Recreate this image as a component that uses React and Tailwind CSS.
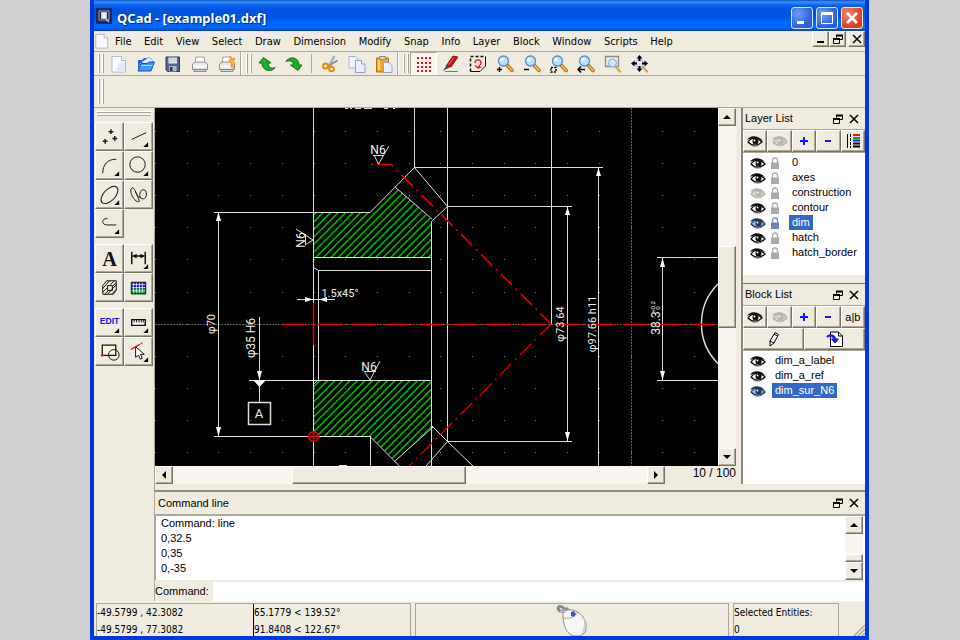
// App.jsx
import { useState } from 'react';

const raised =
  'border border-t-white border-l-white border-r-[#77756a] border-b-[#77756a] bg-[#efebde] shadow-[inset_-1px_-1px_0_#aca899]';

const MENUS = [
  'File', 'Edit', 'View', 'Select', 'Draw', 'Dimension', 'Modify', 'Snap',
  'Info', 'Layer', 'Block', 'Window', 'Scripts', 'Help',
];

const LAYERS = [
  { name: '0', visible: true },
  { name: 'axes', visible: true },
  { name: 'construction', visible: false },
  { name: 'contour', visible: true },
  { name: 'dim', visible: true },
  { name: 'hatch', visible: true },
  { name: 'hatch_border', visible: true },
];

const BLOCKS = ['dim_a_label', 'dim_a_ref', 'dim_sur_N6'];

const HISTORY = ['Command: line', '0,32.5', '0,35', '0,-35'];

/* ---------- icons ---------- */

const Icon = ({ children, className = 'w-[18px] h-[18px]', box = '0 0 18 18' }) => (
  <svg viewBox={box} className={className} fill="none" aria-hidden="true">
    {children}
  </svg>
);

const PageIcon = () => (
  <Icon>
    <path d="M2 1.500h9.500l4 4V17H2z" fill="#fbfcff" stroke="#b4b9cc" />
    <path d="M8 9l7-2v9.500H6z" fill="#e2e8fa" />
    <path d="M11.500 1.500v4h4" fill="#fff" stroke="#a9aec4" />
  </Icon>
);

const OpenIcon = () => (
  <Icon>
    <path d="M1 5h4l2-2h4v5H3l-2 8z" fill="#1b62c8" />
    <path d="M5 7l7-5 4 4-3 5H5z" fill="#e8f1ff" stroke="#6f9fdc" strokeWidth=".8" />
    <path d="M1 16L4 8.500h6l2-1.500h5.500L14 16z" fill="#3d9bf5" stroke="#0c51b8" />
    <path d="M4.500 10.500h11" stroke="#a8d6ff" />
  </Icon>
);

const SaveIcon = () => (
  <Icon>
    <path d="M2 2h13.500v14.500H3.500L2 15z" fill="#56658c" stroke="#2c3656" />
    <path d="M4.500 2.500h8.500v6H4.500z" fill="#e6ebf5" />
    <path d="M4.500 4h8.500M4.500 6h8.500" stroke="#b3bdd4" />
    <path d="M5 11h7.500v5.500H5z" fill="#aeb8cf" />
    <path d="M6 12h2.500v4H6z" fill="#29324e" />
  </Icon>
);

const PrintIcon = ({ preview }) => (
  <Icon>
    <path d="M5 2h8l1 6H4z" fill="#fff" stroke="#a0a0a0" />
    <path d="M1.500 9l2.500-2h10l2.500 2v5.500h-15z" fill="#e9e9ea" stroke="#8d8d90" />
    <path d="M2 11.500h14" stroke="#fff" strokeWidth="1.500" />
    <path d="M3 14.500h12v2H3z" fill="#d2d2d4" stroke="#77777a" strokeWidth=".8" />
    {preview && (
      <path d="M12 1l2 3 3-1-1.500 3L17 9l-2.500 1L16 13l-3-1 .5-4-3-3 2.500-.5z" fill="#ffb325" stroke="#e87f10" strokeWidth=".7" />
    )}
  </Icon>
);

const UndoIcon = () => (
  <Icon>
    <path d="M5.500 2.500L1 8h3c0 5 4 8 8.500 7.500 2-.3 3.500-1.500 4.500-3-3.500 1.500-6.500.5-7-4.500h3z" fill="#1fae25" stroke="#08720f" />
  </Icon>
);

const RedoIcon = () => (
  <Icon>
    <path d="M13 15.500L17 10h-3C14 5 10.500 2.500 6.500 3 4 3.300 2 4.700 1 6.500c4-1.500 7-.5 7.500 3.500H5.500z" fill="#1fae25" stroke="#08720f" />
  </Icon>
);

const CutIcon = () => (
  <Icon>
    <path d="M13.500 1L8 10.500M16.500 5.500L7 11" stroke="#7d8899" strokeWidth="2" />
    <path d="M13.500 1L8.500 9.500" stroke="#dfe6f0" strokeWidth=".8" />
    <circle cx="4.500" cy="11" r="2.500" stroke="#e58a12" strokeWidth="2" />
    <circle cx="10.500" cy="14" r="2.300" stroke="#e58a12" strokeWidth="2" />
  </Icon>
);

const CopyIcon = () => (
  <Icon>
    <path d="M1 1.500h6.500l2.500 2.500V13H1z" fill="#f4f7ff" stroke="#a3aed0" />
    <path d="M7.500 5.500h6l3.500 3.500v8.500H7.500z" fill="#e9effd" stroke="#93a1cb" />
    <path d="M13.500 5.500V9H17" fill="#fff" stroke="#93a1cb" />
  </Icon>
);

const PasteIcon = () => (
  <Icon>
    <path d="M1.500 3h12v14h-12z" fill="#f0a52c" stroke="#b97408" />
    <path d="M3 5h2v10H3z" fill="#ffd585" />
    <path d="M4.500 1.500h6v3h-6z" fill="#d5d5d2" stroke="#8e8b7e" />
    <path d="M8.500 7.500h5.500l3 3v7H8.500z" fill="#e9effd" stroke="#93a1cb" />
  </Icon>
);

const GridIcon = () => (
  <Icon>
    {[2, 6, 10, 14].map((x) =>
      [2, 7, 11, 15].map((y) => <rect key={`${x}-${y}`} x={x} y={y} width="2" height="2" fill="#f01010" />)
    )}
  </Icon>
);

const DraftIcon = () => (
  <Icon>
    <path d="M11 1l5 1-7 10-5-1z" fill="#c41414" stroke="#7c0a0a" strokeWidth=".8" />
    <path d="M12 2.500L6.500 9.500" stroke="#ff6a5a" />
    <path d="M4 11l4.500 1-5 2.500-2.500 1.500z" fill="#454545" />
    <path d="M3 16.500h13" stroke="#e04a4a" />
  </Icon>
);

const RedrawIcon = () => (
  <Icon>
    <path d="M1.500 16.500v-15h15" stroke="#111" strokeWidth="1.500" strokeDasharray="3 2" />
    <path d="M16.500 1.500V11l-5.500 5.500H1.500" stroke="#111" />
    <path d="M6 8a3 3 0 1 1 4.500 2.500L9 12.500M6 10.500l3 2.500 3.500-1" stroke="#f01010" strokeWidth="1.300" />
  </Icon>
);

const ZoomIcon = ({ kind }) => (
  <Icon>
    <path d="M11 10l5 5.500" stroke="#9a5d0e" strokeWidth="3.500" strokeLinecap="round" />
    <path d="M11.500 10.500l4.500 5" stroke="#f7b23c" strokeWidth="2" strokeLinecap="round" />
    <circle cx="7.500" cy="6" r="5" fill="#b5e2fb" stroke="#5a8cc8" strokeWidth="1.300" />
    <circle cx="6" cy="4.500" r="2" fill="#eefaff" />
    {kind === 'in' && <path d="M1 14.500h5M3.500 12v5" stroke="#000" strokeWidth="1.500" />}
    {kind === 'out' && <path d="M1 14.500h5" stroke="#000" strokeWidth="1.500" />}
    {kind === 'auto' && <path d="M1 12.500h5v4.500h-5z" stroke="#000" strokeWidth="1.500" strokeDasharray="2 1.200" />}
    {kind === 'prev' && <path d="M1 14.500h7M4 11.500l-3 3 3 3" stroke="#000" strokeWidth="1.500" />}
  </Icon>
);

const ZoomWindowIcon = () => (
  <Icon>
    <path d="M1.500 1.500h13v10h-13z" stroke="#8b8b86" strokeWidth="1.300" />
    <path d="M11.500 11.500l4.500 5" stroke="#d9a659" strokeWidth="2.500" strokeLinecap="round" />
    <circle cx="8.500" cy="8" r="4" fill="#cdeafb" stroke="#88aad2" />
  </Icon>
);

const PanIcon = () => (
  <Icon>
    <path d="M11 11l5 5.500" stroke="#d9a659" strokeWidth="2.500" strokeLinecap="round" />
    <circle cx="8.500" cy="8.500" r="4" fill="#dcf0fb" stroke="#9db8d6" />
    <path d="M8.500 0l3 3.500h-2V6h-2V3.500h-2zM8.500 17l3-3.500h-2V11h-2v2.500h-2zM0 8.500l3.500-3v2H6v2H3.500v2zM17 8.500l-3.500-3v2H11v2h2.500v2z" fill="#000" />
  </Icon>
);

const EyeIcon = ({ dim, tint }) => {
  const c = dim ? '#b5b3ab' : tint ? '#1d3763' : '#0a0a0a';
  return (
    <Icon className="w-4 h-3" box="0 0 16 12">
      <path d="M1 7c3-4.500 9-5 14 0-4 4-10 4.500-14 0z" fill={dim ? '#d8d6ce' : tint ? '#a9bddd' : '#fff'} stroke={c} strokeWidth="1.200" />
      <path d="M0 5C3 0 11 0 16 6 11 3 6 2 0 5z" fill={c} />
      <circle cx="8.500" cy="6.500" r="3" fill={c} />
      <circle cx="7.500" cy="5.500" r="1" fill="#fff" />
      <path d="M3 9.500c3 2.500 8 2 10-.5" stroke={dim ? '#c9c7be' : '#7d8088'} />
    </Icon>
  );
};

const LockIcon = ({ tint }) => (
  <Icon className="w-2.5 h-3" box="0 0 10 12">
    <path d="M2.500 6V3.500a2.500 2.500 0 0 1 5 0V6" stroke={tint ? '#8099c6' : '#b0b0b0'} strokeWidth="1.300" />
    <path d="M1 5.500h8V12H1z" fill={tint ? '#6c86b8' : '#a9a9a9'} />
  </Icon>
);

const PlusIcon = () => (
  <Icon className="w-2.5 h-2.5" box="0 0 10 10">
    <path d="M1 5h8M5 1v8" stroke="#1414f0" strokeWidth="2" />
  </Icon>
);

const MinusIcon = () => (
  <Icon className="w-2.5 h-2.5" box="0 0 10 10">
    <path d="M2 5h6" stroke="#1414f0" strokeWidth="2" />
  </Icon>
);

const FloatIcon = () => (
  <Icon className="w-2.5 h-2.5" box="0 0 10 10">
    <path d="M3.500 4V1.500h6v4H7" stroke="#000" />
    <path d="M3 1.500h7" stroke="#000" strokeWidth="2" />
    <path d="M.5 5h6v4.500h-6z" stroke="#000" />
    <path d="M0 5h7" stroke="#000" strokeWidth="2" />
  </Icon>
);

const CloseIcon = () => (
  <Icon className="w-2.5 h-2.5" box="0 0 10 10">
    <path d="M1 1l8 8M9 1L1 9" stroke="#000" strokeWidth="1.500" />
  </Icon>
);

const LayerAttribIcon = () => (
  <Icon className="w-[14px] h-4" box="0 0 14 16">
    <path d="M1.500 1v14" stroke="#000" />
    <path d="M4.500 1v14" stroke="#000" strokeDasharray="3 1" />
    <path d="M7 2h7" stroke="#f01010" strokeWidth="2" />
    <path d="M7 5h7" stroke="#08a015" strokeWidth="2" />
    <path d="M7 7.500h7" stroke="#1515f0" strokeWidth="2" />
    <path d="M7 10.500h7M7 13.500h7" stroke="#000" strokeWidth="2" />
  </Icon>
);

const PencilIcon = () => (
  <Icon className="w-3 h-4" box="0 0 12 16">
    <path d="M2 10L7 1.500l3.500 2L6 12l-4 3zM2 10l4 2M6 3l3.500 2" stroke="#000" fill="#fff" />
  </Icon>
);

const InsertIcon = () => (
  <Icon className="w-[18px] h-4" box="0 0 18 16">
    <path d="M4.500 1h8l4 4v10.500h-12z" fill="#fff" stroke="#000" />
    <path d="M12.500 1v4h4" stroke="#000" />
    <path d="M1 5c4-2.500 8-1 9 3h2.500L9 12 5.500 8H8C7 5.500 5 5 1 6z" fill="#1515f0" stroke="#1515f0" />
  </Icon>
);

const Arrow = ({ dir }) => {
  const d = {
    up: 'M4 2l4 4H0z',
    down: 'M4 6l4-4H0z',
    left: 'M2 4l4-4v8z',
    right: 'M6 4L2 0v8z',
  }[dir];
  return (
    <Icon className="w-2 h-2" box="0 0 8 8">
      <path d={d} fill="#000" />
    </Icon>
  );
};

/* left hand CAD tools, all drawn on a 28 unit grid */
const TOOL_GROUPS = [
  [
    { id: 'Points', more: false, art: <path d="M13 9h5M15.500 6.500v5M17 16h5M19.500 13.500v5M7 19h5M9.500 16.500v5" strokeWidth="1.500" /> },
    { id: 'Lines', more: true, art: <path d="M7 17l15-7" /> },
    { id: 'Arcs', more: true, art: <path d="M7 22C7 13 12 7.500 21 7.500" /> },
    { id: 'Circles', more: true, art: <circle cx="13" cy="13" r="8" /> },
    { id: 'Ellipses', more: true, art: <ellipse cx="14" cy="14.500" rx="11" ry="6" transform="rotate(-46 14 14.500)" /> },
    {
      id: 'Splines', more: false,
      art: <path d="M14 21.500C11 22 6 15 6 10.500 6 6 9 6 10.500 10L14 18c1 3 1 3.500 0 3.500M11 11.500c1 3 5 7 8 7 4 0 4.500-9.500 0-9.500-3.500 0-4.500 6-3 8.500" />,
    },
    { id: 'Polylines', more: true, art: <path d="M12 9c-6-1-7 6-1 6.500h10" /> },
  ],
  [
    { id: 'Text', more: false, letter: true },
    {
      id: 'Dimensions', more: true,
      art: (
        <>
          <path d="M7 7v13M21 7v13M8 11.500h12" strokeWidth="1.500" />
          <path d="M8 11.500l4-2.500v5zM20 11.500l-4-2.500v5z" fill="#000" stroke="none" />
        </>
      ),
    },
    {
      id: 'Hatch', more: false,
      art: (
        <>
          <path d="M7 21V12l4-5h10v10l-3 4z" />
          <path d="M12 12h5v5h-5z" />
          <path d="M7 15l7-8M7 19l5-5M15 11l4-4M9 21l4-4M12 21l9-10M16 21l5-5M17 13l4-4" />
        </>
      ),
    },
    {
      id: 'Image', more: false,
      art: (
        <>
          <path d="M6.500 8.500h15v7h-15z" fill="#1414d8" stroke="none" />
          <path d="M6.500 15h15v6h-15z" fill="#0c9a18" stroke="none" />
          <path d="M9 8v13M12 8v13M15 8v13M18 8v13M6 11h16M6 14h16M6 17.500h16" stroke="#e8f0ff" strokeWidth=".8" />
          <path d="M6.500 8.500h15v12h-15z" />
        </>
      ),
    },
  ],
  [
    { id: 'Edit', more: true, word: true },
    {
      id: 'Measure', more: true,
      art: (
        <>
          <path d="M7 11h14v6H7z" fill="#fff" strokeWidth="1.500" />
          <path d="M9.500 11v3M12 11v3M14.500 11v3M17 11v3M19 11v3" />
        </>
      ),
    },
    {
      id: 'Block', more: false,
      art: (
        <>
          <path d="M6.500 7.500h14V18h-14z" fill="#fff8dc" strokeWidth="1.300" />
          <circle cx="18.500" cy="17.500" r="5.500" />
          <circle cx="6.500" cy="18" r="1.500" fill="#f01010" stroke="none" />
        </>
      ),
    },
    {
      id: 'Select', more: true,
      art: (
        <>
          <path d="M6 12l12-7" stroke="#f01010" strokeWidth="1.300" strokeDasharray="5 1" />
          <path d="M11 9v11l3-2 2 4 2-1-2-4h4z" fill="#fff" />
        </>
      ),
    },
  ],
];

/* ---------- small parts ---------- */

const Handle = () => (
  <span className="flex gap-0.5 py-0.5 ml-1 mr-px">
    <span className="w-0.5 border-l border-white bg-[#a5a294]" />
    <span className="w-0.5 border-l border-white bg-[#a5a294]" />
  </span>
);

const BarButton = ({ label, down, children }) => (
  <button
    type="button"
    aria-label={label}
    className={
      down
        ? 'w-[27px] flex items-center justify-center border border-t-[#aca899] border-l-[#aca899] border-r-white border-b-white bg-[#f7f5ee]'
        : 'w-[27px] flex items-center justify-center'
    }
  >
    {children}
  </button>
);

const DockTitle = ({ title }) => (
  <div className="flex items-center h-[22px] pl-0.5 pr-1.5 gap-1.5 border-b border-[#aca899]">
    <h2 className="flex-1">{title}</h2>
    <button type="button" aria-label={`Float ${title}`}><FloatIcon /></button>
    <button type="button" aria-label={`Close ${title}`}><CloseIcon /></button>
  </div>
);

const PanelButton = ({ label, children }) => (
  <button type="button" aria-label={label} className={`flex-1 h-[22px] flex items-center justify-center ${raised}`}>
    {children}
  </button>
);

const VScroll = ({ before, thumb }) => (
  <div className="w-[18px] flex flex-col bg-[#f7f5ee]">
    <button type="button" aria-label="Scroll up" className={`h-[18px] flex items-center justify-center ${raised}`}>
      <Arrow dir="up" />
    </button>
    <div className="flex-1 flex flex-col">
      <div className={before} />
      <div className={`${thumb} ${raised}`} />
    </div>
    <button type="button" aria-label="Scroll down" className={`h-[18px] flex items-center justify-center ${raised}`}>
      <Arrow dir="down" />
    </button>
  </div>
);

/* ---------- drawing area ---------- */

const GRID_X = Array.from({ length: 18 }, (_, i) => Math.round(155 + i * 31.7));
const GRID_Y = Array.from({ length: 11 }, (_, i) => Math.round(131 + i * 32.1));

const Drawing = () => (
  <svg
    viewBox="155 108 563 358"
    preserveAspectRatio="xMinYMin slice"
    className="block w-full h-full bg-black"
    role="img"
    aria-label="example01.dxf"
  >
    <defs>
      <pattern id="hatch" width="5.300" height="5.300" patternUnits="userSpaceOnUse" patternTransform="rotate(-45)">
        <path d="M0 2.500h5.300" stroke="#00d400" strokeWidth="1.400" />
      </pattern>
    </defs>

    {GRID_X.map((x) => GRID_Y.map((y) => <rect key={`${x}-${y}`} x={x} y={y} width="1" height="1" fill="#787878" />))}
    <path d="M155 324.500H718M631.500 108V466" stroke="#5c5c5c" strokeDasharray="2 1" />

    {/* hatched sections */}
    <path d="M313 212H370L395 187 431 219V257H313z" fill="url(#hatch)" />
    <path d="M313 380H431V428L395 461 370 436H313z" fill="url(#hatch)" />

    {/* contours */}
    <g stroke="#dcdcdc" fill="none">
      <path d="M313.500 108V466M447.500 108V441M414.500 108V167M551.500 108V324" />
      <path d="M214 212.500H370L414.500 167.500 447.500 206.500 431.500 221.500V466M395 187L432 219" />
      <path d="M313 257.500H431M313 267l5.500 3.500H431M318.500 270V380l-5 4" />
      <path d="M249 380.500H431M214 436.500H370l30 30M370.500 436V466" />
      <path d="M395 461L433 427M431 425l16.500 16.500L473 466M447.500 441.500L426 466" />
      <path d="M414 167.500H603M447 206.500H572M447 441.500H572M657 257.500H718M657 380.500H718" />
      <path d="M218.500 212V436M567.500 206V441M598.500 167V466M662.500 257V380M259.500 317V402" />
      <path d="M297 299.500H335" />
      <path d="M718 284A56 56 0 0 0 718 363.500" strokeWidth="1.500" />
      <path d="M248.500 402.500h22v22h-22z" strokeWidth="1.500" />
      <path d="M345 108.500h3M350 108.500h2M355 108.500h6M364 108.500h8M384 108.500h4M393 108.500h2M339 465.500h8" />
    </g>

    {/* arrow heads */}
    <g fill="#fff">
      <path d="M218.500 212l2.500 9h-5zM218.500 436l2.500-9h-5zM567.500 207l2.500 8h-5zM567.500 441l2.500-9h-5zM598.500 168l2.500 8h-5z" />
      <path d="M662.500 258l2.500 9h-5zM662.500 380l2.500-9h-5zM259.500 380l2.500-9h-5z" />
      <path d="M313 299.500l-8-2.500v5zM319 299.500l8-2.500v5zM253 380h13l-6.500 7z" />
    </g>

    {/* centre lines */}
    <g stroke="#e60000" strokeWidth="1.500" fill="none">
      <path d="M283 324.500H718" strokeDasharray="24 4 2 4" />
      <path d="M378 164.500h13L551 324" strokeDasharray="16 5 2 5" />
      <path d="M551 324L409 466" strokeDasharray="16 5 2 5" strokeWidth="1.200" />
      <path d="M371 164.500h2M313.500 303V345" />
      <circle cx="313.500" cy="436.500" r="5" />
      <path d="M308 436.500h11M313.500 431v11" />
    </g>

    {/* surface finish marks */}
    <g stroke="#dcdcdc" fill="none">
      <path d="M373 155.500h11M374 155l4.500 9L389 146" />
      <path d="M305.500 234v11M313 240l-8 5M313 240l-17-11" />
      <path d="M364 371.500h12M364 371l6 9L380 361" />
    </g>

    <g fill="#eee" textAnchor="middle" className="font-['Roboto','Liberation_Sans',sans-serif] text-[11px]">
      <text x="378" y="154" className="text-[12px]">N6</text>
      <text x="369" y="371" className="text-[12px]">N6</text>
      <text transform="translate(305 240) rotate(-90)" className="text-[12px]">N6</text>
      <text x="340" y="297">1.5x45°</text>
      <text x="259" y="418" className="text-[13px]">A</text>
      <text transform="translate(215 324) rotate(-90)">φ70</text>
      <text transform="translate(255 338) rotate(-90)" className="text-[12px]">φ35 H6</text>
      <text transform="translate(564 324) rotate(-90)">φ73.64</text>
      <text transform="translate(596 324) rotate(-90)">φ97.66 h11</text>
      <text transform="translate(660 323) rotate(-90)" className="text-[12px]">38.3</text>
      <text transform="translate(655 307) rotate(-90)" className="text-[6px]">+0.2</text>
      <text transform="translate(660 308) rotate(-90)" className="text-[6px]">0</text>
    </g>
  </svg>
);

/* ---------- sections ---------- */

const TitleBar = () => (
  <header className="h-[31px] -mx-1 px-1.5 flex items-center gap-1 rounded-t-md bg-[linear-gradient(#0a4fc4_0,#3a93ff_2px,#0a62ee_5px,#0052e0_10px,#0054e4_18px,#0068ff_22px,#0066ff_28px,#0040c4_31px)]">
    <Icon className="w-4 h-4" box="0 0 16 16">
      <path d="M0 0h16v16H0z" fill="#1c2d5c" />
      <path d="M3 3h10v9H3z" stroke="#8d9cc4" />
      <path d="M5.500 4.500h5v6h-5z" fill="#f4f2e4" stroke="#c4c4c4" />
      <path d="M10 11l3 3" stroke="#c4c4c4" strokeWidth="1.500" />
    </Icon>
    <h1 className="flex-1 pl-px pt-1 font-['Noto_Sans','Open_Sans',sans-serif] text-[13px] leading-[18px] font-bold text-white [text-shadow:1px_1px_1px_#03246e]">
      QCad - [example01.dxf]
    </h1>
    <div className="flex gap-[3px] pt-1">
      <button type="button" aria-label="Minimize" className="w-[22px] h-[22px] rounded-[3px] border border-[#d6e4ff] bg-[radial-gradient(circle_at_30%_30%,#6f9bf5,#2a5fdc_70%)]">
        <Icon className="w-5 h-5" box="0 0 20 20"><path d="M5 14.500h7" stroke="#fff" strokeWidth="3" /></Icon>
      </button>
      <button type="button" aria-label="Maximize" className="w-[22px] h-[22px] rounded-[3px] border border-[#d6e4ff] bg-[radial-gradient(circle_at_30%_30%,#6f9bf5,#2a5fdc_70%)]">
        <Icon className="w-5 h-5" box="0 0 20 20">
          <path d="M4.500 5h11v10.500h-11z" stroke="#fff" />
          <path d="M4 5.500h12" stroke="#fff" strokeWidth="3" />
        </Icon>
      </button>
      <button type="button" aria-label="Close" className="w-[22px] h-[22px] rounded-[3px] border border-[#ffe2d8] bg-[radial-gradient(circle_at_30%_30%,#f5896a,#d8401c_70%)]">
        <Icon className="w-5 h-5" box="0 0 20 20"><path d="M5 5l10 10M15 5L5 15" stroke="#fff" strokeWidth="2.500" /></Icon>
      </button>
    </div>
  </header>
);

const MenuBar = () => (
  <nav className="h-[21px] flex items-center border-b border-[#aca899] font-['DejaVu_Sans_Condensed','DejaVu_Sans',sans-serif]">
    <Icon className="w-4 h-4 mr-px" box="0 0 18 18">
      <path d="M2 1.500h9.500l4 4V17H2z" fill="#f7f8ff" stroke="#a9aec4" />
      <path d="M11.500 1.500v4h4" fill="#fff" stroke="#a9aec4" />
    </Icon>
    <ul className="w-[562px] flex justify-between pl-1">
      {MENUS.map((name) => (
        <li key={name}>
          <button type="button" className="block">{name}</button>
        </li>
      ))}
    </ul>
    <div className="flex self-start ml-auto">
      <button type="button" aria-label="Minimize document" className={`w-[17px] h-4 flex items-center justify-center ${raised}`}>
        <Icon className="w-2.5 h-2.5" box="0 0 10 10"><path d="M1 8h7" stroke="#000" strokeWidth="2" /></Icon>
      </button>
      <button type="button" aria-label="Restore document" className={`w-[17px] h-4 mr-0.5 flex items-center justify-center ${raised}`}>
        <FloatIcon />
      </button>
      <button type="button" aria-label="Close document" className={`w-[17px] h-4 flex items-center justify-center ${raised}`}>
        <CloseIcon />
      </button>
    </div>
  </nav>
);

const ToolBar = () => (
  <div className="h-6 flex border-b border-[#aca899]">
    <div className="flex border-r border-[#aca899]">
      <Handle />
      <BarButton label="New"><PageIcon /></BarButton>
      <BarButton label="Open"><OpenIcon /></BarButton>
      <BarButton label="Save"><SaveIcon /></BarButton>
      <BarButton label="Print"><PrintIcon /></BarButton>
      <BarButton label="Print preview"><PrintIcon preview /></BarButton>
    </div>
    <div className="flex border-l border-white border-r border-r-[#aca899]">
      <Handle />
      <BarButton label="Undo"><UndoIcon /></BarButton>
      <BarButton label="Redo"><RedoIcon /></BarButton>
      <span className="w-px mx-1 my-0.5 bg-[#aca899]" />
      <BarButton label="Cut"><CutIcon /></BarButton>
      <BarButton label="Copy"><CopyIcon /></BarButton>
      <BarButton label="Paste"><PasteIcon /></BarButton>
    </div>
    <div className="flex border-l border-white">
      <Handle />
      <BarButton label="Grid" down><GridIcon /></BarButton>
      <BarButton label="Draft mode"><DraftIcon /></BarButton>
      <BarButton label="Redraw"><RedrawIcon /></BarButton>
      <BarButton label="Zoom in"><ZoomIcon kind="in" /></BarButton>
      <BarButton label="Zoom out"><ZoomIcon kind="out" /></BarButton>
      <BarButton label="Auto zoom"><ZoomIcon kind="auto" /></BarButton>
      <BarButton label="Previous view"><ZoomIcon kind="prev" /></BarButton>
      <BarButton label="Window zoom"><ZoomWindowIcon /></BarButton>
      <BarButton label="Pan"><PanIcon /></BarButton>
    </div>
  </div>
);

const CadTools = () => (
  <aside className="w-[61px] pl-px pr-px pt-[3px] border-r border-[#aca899] flex flex-col gap-1.5">
    <div className="flex flex-col gap-px px-0.5 h-[5px]">
      <span className="h-0.5 border-t border-white bg-[#aca899]" />
      <span className="h-0.5 border-t border-white bg-[#aca899]" />
    </div>
    {TOOL_GROUPS.map((group, i) => (
      <div key={i} className="grid grid-cols-2">
        {group.map((tool) => (
          <button key={tool.id} type="button" aria-label={tool.id} className={`h-[29px] flex items-center justify-center ${raised}`}>
            <svg viewBox="0 0 28 28" className="w-[27px] h-[27px]" fill="none" stroke="#111">
              {tool.art}
              {tool.letter && (
                <text x="14" y="22" textAnchor="middle" fill="#111" stroke="none" className="font-['Liberation_Serif',serif] font-bold text-[21px]">A</text>
              )}
              {tool.word && (
                <text x="14" y="16" textAnchor="middle" fill="#1414f0" stroke="none" className="font-['Liberation_Sans',sans-serif] font-bold text-[9px]">EDIT</text>
              )}
              {tool.more && <path d="M24 20v5h-5z" fill="#000" stroke="none" />}
            </svg>
          </button>
        ))}
      </div>
    ))}
  </aside>
);

const LayerList = ({ active, onSelect }) => (
  <section>
    <DockTitle title="Layer List" />
    <div className="flex">
      <PanelButton label="Show all layers"><EyeIcon /></PanelButton>
      <PanelButton label="Hide all layers"><EyeIcon dim /></PanelButton>
      <PanelButton label="Add layer"><PlusIcon /></PanelButton>
      <PanelButton label="Remove layer"><MinusIcon /></PanelButton>
      <PanelButton label="Layer attributes"><LayerAttribIcon /></PanelButton>
    </div>
    <ul className="h-[123px] pt-0.5 bg-white border-t border-[#aca899]">
      {LAYERS.map(({ name, visible }) => (
        <li key={name} className="flex items-center h-[15px] pl-[7px]">
          <EyeIcon dim={!visible} tint={name === active} />
          <span className="w-1" />
          <LockIcon tint={name === active} />
          <button
            type="button"
            onClick={() => onSelect(name)}
            className={name === active ? 'ml-[9px] px-[3px] h-[15px] bg-[#316ac5] text-white' : 'ml-[9px] px-[3px] h-[15px]'}
          >
            {name}
          </button>
        </li>
      ))}
    </ul>
  </section>
);

const BlockList = ({ active, onSelect }) => (
  <section className="flex-1 flex flex-col border-t border-[#77756a]">
    <DockTitle title="Block List" />
    <div className="flex">
      <PanelButton label="Show all blocks"><EyeIcon /></PanelButton>
      <PanelButton label="Hide all blocks"><EyeIcon dim /></PanelButton>
      <PanelButton label="Add block"><PlusIcon /></PanelButton>
      <PanelButton label="Remove block"><MinusIcon /></PanelButton>
      <PanelButton label="Rename block">a|b</PanelButton>
    </div>
    <div className="flex">
      <PanelButton label="Edit block"><PencilIcon /></PanelButton>
      <PanelButton label="Insert block"><InsertIcon /></PanelButton>
    </div>
    <ul className="flex-1 pt-0.5 bg-white border-t border-[#aca899]">
      {BLOCKS.map((name) => (
        <li key={name} className="flex items-center h-[15px] pl-[7px]">
          <EyeIcon tint={name === active} />
          <button
            type="button"
            onClick={() => onSelect(name)}
            className={name === active ? 'ml-1.5 px-[3px] h-[15px] bg-[#316ac5] text-white' : 'ml-1.5 px-[3px] h-[15px]'}
          >
            {name}
          </button>
        </li>
      ))}
    </ul>
  </section>
);

const CommandDock = () => (
  <section className="border-t-2 border-[#8c8a7e]">
    <div className="flex items-center h-[22px] pl-[3px] pr-1.5 gap-1.5">
      <h2 className="flex-1">Command line</h2>
      <button type="button" aria-label="Float Command line"><FloatIcon /></button>
      <button type="button" aria-label="Close Command line"><CloseIcon /></button>
    </div>
    <div className="flex h-[66px] pr-0.5 border-l border-t-2 border-[#aca899] bg-white">
      <ol className="flex-1 pl-[5px]">
        {HISTORY.map((line) => (
          <li key={line}>{line}</li>
        ))}
      </ol>
      <VScroll before="flex-1" thumb="h-2" />
    </div>
    <div className="flex items-center h-[21px] border-t-2 border-[#efebde]">
      <label htmlFor="command" className="w-[58px]">Command:</label>
      <input id="command" type="text" className="flex-1 h-full bg-white outline-none" />
    </div>
  </section>
);

const MouseIcon = () => (
  <svg viewBox="0 0 34 33" className="w-[34px] h-[33px]" fill="none" aria-hidden="true">
    <path d="M17 10C13 3 8 9 5 7S3 1 7 3s3 4 6 1" stroke="#8a8a8a" strokeWidth="3" />
    <path d="M17 10C13 3 8 9 5 7" stroke="#e0e0e0" />
    <path d="M8 13c-1-5 3-8 9-7 7 1 13 7 14 15 1 8-3 11-10 11S9 26 8 13z" fill="#f6f6f6" stroke="#8c8c8c" />
    <path d="M28 13c4 6 4 14-2 18 3-6 4-12 2-18z" fill="#cfcfcf" />
    <path d="M9 14c6 1 11-1 14-6" stroke="#a5a5a5" />
    <path d="M16 8l3-1 2 3-2 3-3-1z" fill="#3f55b8" />
  </svg>
);

const StatusBar = () => (
  <footer className="h-[35px] pl-0.5 pt-px flex gap-1 border-t border-[#f7f5ee] font-['DejaVu_Sans_Condensed','DejaVu_Sans',sans-serif] text-[10px] leading-[17px]">
    <div className="w-[315px] flex border border-b-0 border-[#aca899]">
      <p className="flex-1 border-r border-black">-49.5799 , 42.3082<br />-49.5799 , 77.3082</p>
      <p className="flex-1">65.1779 &lt; 139.52°<br />91.8408 &lt; 122.67°</p>
    </div>
    <div className="flex-1 flex justify-center border border-b-0 border-[#aca899]"><MouseIcon /></div>
    <p className="w-[106px] border border-b-0 border-[#aca899]">Selected Entities:<br />0</p>
    <div className="w-[22px] flex items-end justify-end">
      <Icon className="w-3 h-3" box="0 0 12 12">
        <path d="M1 12L12 1M5 12l7-7M9 12l3-3" stroke="#aca899" strokeWidth="1.500" />
      </Icon>
    </div>
  </footer>
);

const App = () => {
  const [layer, setLayer] = useState('dim');
  const [block, setBlock] = useState('dim_sur_N6');

  return (
    <div className="h-screen pl-[90px] pr-[91px] bg-[#d0d0d0] font-['Liberation_Sans',Arial,sans-serif] text-[11px] leading-[15px] text-black">
      <div className="h-full flex flex-col overflow-hidden border-x-4 border-b-4 border-[#0038dc] bg-[#efebde]">
        <TitleBar />
        <MenuBar />
        <ToolBar />
        <div className="h-8 flex py-px border-b border-[#aca899]"><Handle /></div>

        <div className="flex-1 min-h-0 flex">
          <CadTools />
          <div className="flex-1 min-w-0 flex flex-col">
            <div className="flex-1 min-h-0 flex">
              <main className="flex-1 min-w-0 flex flex-col">
                <div className="flex-1 min-h-0 flex">
                  <div className="flex-1 min-w-0"><Drawing /></div>
                  <VScroll before="h-[120px]" thumb="h-[82px]" />
                </div>
                <div className="h-[18px] mb-1.5 flex">
                  <div className="flex-1 flex bg-[#f7f5ee]">
                    <button type="button" aria-label="Scroll left" className={`w-[18px] flex items-center justify-center ${raised}`}>
                      <Arrow dir="left" />
                    </button>
                    <div className="flex-1 flex">
                      <div className="w-1/4" />
                      <div className={`w-[174px] ${raised}`} />
                    </div>
                    <button type="button" aria-label="Scroll right" className={`w-[18px] flex items-center justify-center ${raised}`}>
                      <Arrow dir="right" />
                    </button>
                  </div>
                  <p className="w-[71px] text-right text-xs leading-[15px]">10 / 100</p>
                </div>
              </main>
              <div className="w-[129px] pl-[5px] pb-1.5 flex">
                <div className="flex-1 flex flex-col gap-2 border-l-2 border-[#8c8a7e]">
                  <LayerList active={layer} onSelect={setLayer} />
                  <BlockList active={block} onSelect={setBlock} />
                </div>
              </div>
            </div>
            <CommandDock />
          </div>
        </div>
        <StatusBar />
      </div>
    </div>
  );
};

export default App;
